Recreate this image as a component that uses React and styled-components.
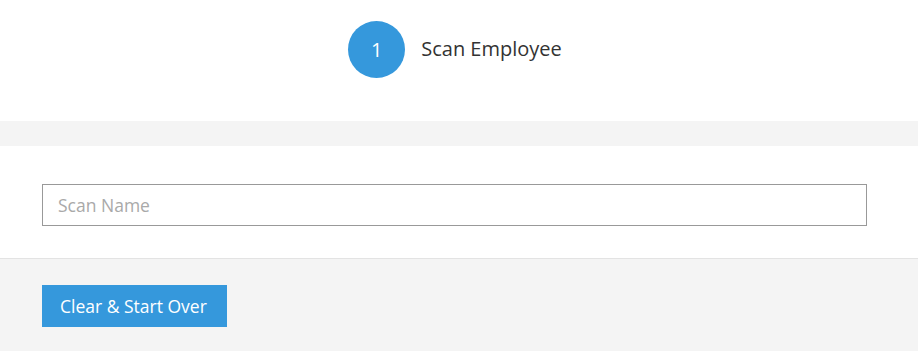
import React from 'react';
import styled, { createGlobalStyle } from 'styled-components';

const GlobalStyle = createGlobalStyle`
  * { box-sizing: border-box; }
  body {
    margin: 0;
    font-family: "Open Sans", "Liberation Sans", sans-serif;
    background: #f4f4f4;
  }
`;

const Header = styled.div`
  height: 121px;
  background: #fff;
  display: flex;
  justify-content: center;
  align-items: flex-start;
  padding: 21px 0 0 0;
  gap: 16px;
  margin-left: -8px;
`;

const StepCircle = styled.div`
  width: 57px;
  height: 57px;
  border-radius: 50%;
  background: #3598dc;
  color: #fff;
  display: flex;
  align-items: center;
  justify-content: center;
  font-size: 20px;
`;

const StepTitle = styled.div`
  font-size: 20px;
  line-height: 57px;
  color: #333;
  margin-top: -1px;
`;

const Spacer = styled.div`
  height: 25px;
`;

const Body = styled.div`
  background: #fff;
  padding: 38px 51px 32px 42px;
  border-bottom: 1px solid #e3e3e3;
`;

const Input = styled.input`
  display: block;
  width: 100%;
  height: 42px;
  border: 1px solid #999;
  padding: 0 15px;
  font-family: inherit;
  font-size: 17.5px;
  color: #333;
  outline: none;
  &::placeholder { color: #a9a9a9; }
`;

const Footer = styled.div`
  padding: 26px 42px;
`;

const Button = styled.button`
  height: 42px;
  padding: 0 20px 0 18px;
  border: none;
  background: #3598dc;
  color: #fff;
  font-family: inherit;
  font-size: 17.5px;
  cursor: pointer;
`;

export default function App() {
  return (
    <>
      <GlobalStyle />
      <Header>
        <StepCircle>1</StepCircle>
        <StepTitle>Scan Employee</StepTitle>
      </Header>
      <Spacer />
      <Body>
        <Input placeholder="Scan Name" />
      </Body>
      <Footer>
        <Button>Clear &amp; Start Over</Button>
      </Footer>
    </>
  );
}
